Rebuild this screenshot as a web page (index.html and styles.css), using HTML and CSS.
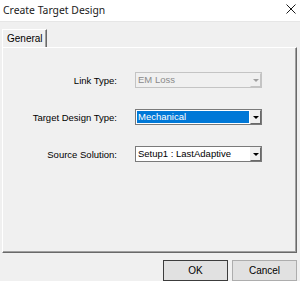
FILE: index.html
```html
<!DOCTYPE html>
<html>
<head>
<meta charset="utf-8">
<link rel="stylesheet" href="styles.css">
</head>
<body>
<div class="window">
  <div class="titlebar">
    <span class="title">Create Target Design</span>
    <svg class="close" width="10" height="10" viewBox="0 0 10 10"><path d="M0.5 0.5 L9.5 9.5 M9.5 0.5 L0.5 9.5" stroke="#1a1a1a" stroke-width="1" fill="none"/></svg>
  </div>
  <div class="client">
    <div class="tabs">
      <div class="tab">General</div>
    </div>
    <div class="panel">
      <div class="form">
        <div class="label">Link Type:</div>
        <div class="combo disabled">
          <div class="value">EM Loss</div>
          <div class="arrow"><span class="tri"></span></div>
        </div>
        <div class="label">Target Design Type:</div>
        <div class="combo">
          <div class="value selected">Mechanical</div>
          <div class="arrow"><span class="tri"></span></div>
        </div>
        <div class="label">Source Solution:</div>
        <div class="combo">
          <div class="value">Setup1 : LastAdaptive</div>
          <div class="arrow"><span class="tri"></span></div>
        </div>
      </div>
    </div>
    <div class="buttons">
      <div class="btn default">OK</div>
      <div class="btn">Cancel</div>
    </div>
  </div>
</div>
</body>
</html>
```
FILE: styles.css
```css
html, body {
  margin: 0;
  padding: 0;
}
body {
  width: 300px;
  height: 281px;
  overflow: hidden;
  background: #f0f0f0;
  font-family: "Liberation Sans", Arial, sans-serif;
  font-size: 9.5px;
  color: #000;
}
.window {
  width: 300px;
  height: 281px;
  display: flex;
  flex-direction: column;
}
.titlebar {
  height: 23px;
  background: #ffffff;
  border-bottom: 1px solid #e6e6e6;
  display: flex;
  align-items: center;
  justify-content: space-between;
  padding: 0 4px 0 3px;
  box-sizing: border-box;
}
.title {
  font-family: "Noto Sans", "Open Sans", sans-serif;
  font-size: 10.4px;
  color: #1a1a1a;
  margin-top: -2px;
}
.close {
  margin-top: -4px;
}
.client {
  flex: 1;
  display: flex;
  flex-direction: column;
  padding: 7px 3px 0 2px;
}
.tabs {
  display: flex;
  height: 18px;
  position: relative;
  z-index: 1;
}
.tab {
  width: 45px;
  height: 18px;
  box-sizing: border-box;
  border-top: 1px solid #ffffff;
  border-left: 1px solid #ffffff;
  border-right: 1px solid #696969;
  box-shadow: inset -1px 0 0 #a0a0a0;
  background: #f0f0f0;
  padding: 3px 0 0 4px;
  margin-bottom: -1px;
  font-size: 10px;
}
.panel {
  height: 206px;
  box-sizing: border-box;
  border-top: 1px solid #ffffff;
  border-left: 1px solid #ffffff;
  border-right: 1px solid #696969;
  border-bottom: 1px solid #696969;
  box-shadow: inset -1px -1px 0 #a0a0a0;
  background: #f0f0f0;
}
.form {
  display: grid;
  grid-template-columns: 114px 127px;
  column-gap: 18px;
  row-gap: 21px;
  padding-top: 24px;
  grid-auto-rows: 16px;
  align-items: center;
}
.label {
  text-align: right;
  color: #000;
}
.combo {
  height: 16px;
  box-sizing: border-box;
  border: 1px solid #7a7a7a;
  background: #fff;
  display: flex;
  align-items: stretch;
}
.combo .value {
  flex: 1;
  padding: 0 1px;
  margin: 1px;
  line-height: 12px;
  white-space: nowrap;
  overflow: hidden;
}
.combo .value.selected {
  background: #0078d7;
  color: #fff;
}
.combo .arrow {
  width: 11px;
  box-sizing: border-box;
  border-top: 1px solid #f0f0f0;
  border-left: 1px solid #f0f0f0;
  border-right: 1px solid #696969;
  border-bottom: 1px solid #696969;
  background: #f0f0f0;
  display: flex;
  align-items: center;
  justify-content: center;
}
.tri {
  width: 0;
  height: 0;
  border-left: 3px solid transparent;
  border-right: 3px solid transparent;
  border-top: 3px solid #000;
}
.combo.disabled {
  border-color: #c4c4c4;
  background: #f0f0f0;
}
.combo.disabled .value {
  color: #8a8a8a;
}
.combo.disabled .arrow {
  border-right-color: #c4c4c4;
  border-bottom-color: #c4c4c4;
}
.combo.disabled .tri {
  border-top-color: #a0a0a0;
}
.buttons {
  display: flex;
  justify-content: flex-end;
  gap: 4px;
  padding-top: 7px;
}
.btn {
  width: 65px;
  height: 21px;
  box-sizing: border-box;
  border: 1px solid #adadad;
  background: #e1e1e1;
  display: flex;
  align-items: center;
  justify-content: center;
  font-size: 10px;
}
.btn.default {
  border-color: #3c3c3c;
}
```
